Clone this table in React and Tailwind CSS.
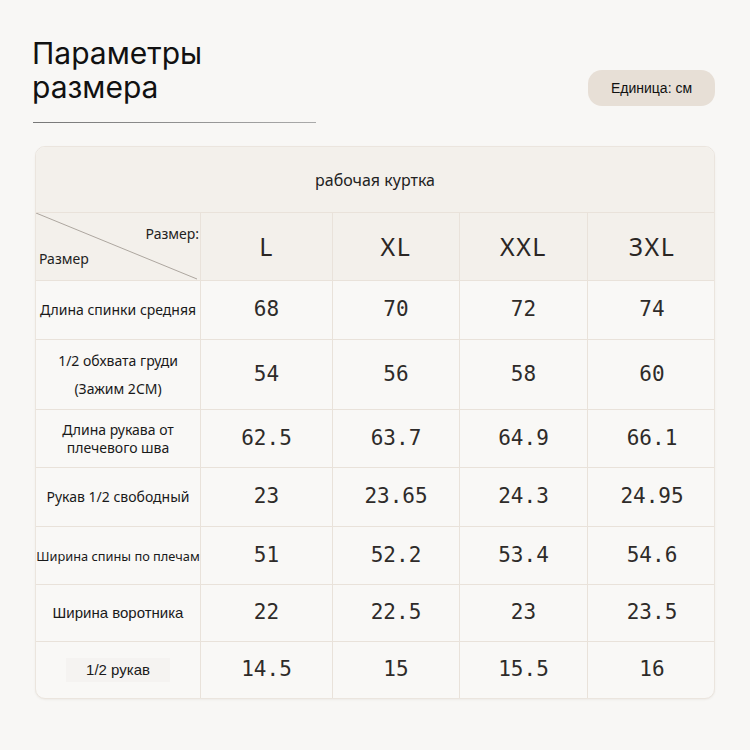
import React from "react";

const sizes = ["L", "XL", "XXL", "3XL"];
const rows = [
  { label: ["Длина спинки средняя"], vals: ["68", "70", "72", "74"], h: "h-[59px]" },
  { label: ["1/2 обхвата груди", "(Зажим 2CM)"], vals: ["54", "56", "58", "60"], h: "h-[70px]", spaced: true },
  { label: ["Длина рукава от", "плечевого шва"], vals: ["62.5", "63.7", "64.9", "66.1"], h: "h-[58px]" },
  { label: ["Рукав 1/2 свободный"], vals: ["23", "23.65", "24.3", "24.95"], h: "h-[59px]" },
  { label: ["Ширина спины по плечам"], vals: ["51", "52.2", "53.4", "54.6"], h: "h-[58px]", small: true },
  { label: ["Ширина воротника"], vals: ["22", "22.5", "23", "23.5"], h: "h-[57px]", narrow: true },
  { label: ["1/2 рукав"], vals: ["14.5", "15", "15.5", "16"], h: "h-[56px]", narrow: true, box: true, last: true },
];

export default function App() {
  return (
    <div className="w-[750px] h-[750px] bg-[#f8f7f5] relative overflow-hidden" style={{ fontFamily: "'Noto Sans', sans-serif" }}>
      <div className="flex justify-between items-start pl-[32px] pr-[35px] pt-[36px]">
        <div>
          <h1 className="text-[30px] leading-[34px] text-[#111]" style={{ fontFamily: "Inter, sans-serif" }}>
            Параметры
            <br />
            размера
          </h1>
        </div>
        <div className="mt-[34px] w-[127px] h-[36px] rounded-[14px] bg-[#e7dfd6] flex items-center justify-center text-[14px] text-[#111]" style={{ fontFamily: "'Liberation Sans', sans-serif" }}>
          Единица: см
        </div>
      </div>
      <div className="ml-[33px] mt-[16px] w-[283px] h-[1px] bg-gradient-to-r from-[#777] to-[#aaa]" />
      <div className="ml-[35px] mt-[23px] w-[680px] rounded-[10px] border border-[#ebe5de] overflow-hidden bg-[#f9f8f6] shadow-[0_1px_2px_rgba(120,100,80,0.08)]">
        <div className="h-[66px] bg-[#f3f0eb] border-b border-[#e9e2da] flex items-center justify-center text-[16px] text-[#222]">
          рабочая куртка
        </div>
        <div className="grid grid-cols-[165px_132px_127px_128px_128px]">
          <div className="relative h-[68px] bg-[#f3f0eb] border-r border-b border-[#e9e2da]">
            <svg className="absolute inset-0" width="165" height="68">
              <line x1="0" y1="0" x2="161" y2="66" stroke="#9a938c" strokeWidth="0.8" />
            </svg>
            <span className="absolute right-[1px] top-[10px] text-[14px] text-[#222]">Размер:</span>
            <span className="absolute left-[3px] top-[35px] text-[14px] text-[#222]">Размер</span>
          </div>
          {sizes.map((s, i) => (
            <div key={s} className={`h-[68px] bg-[#f3f0eb] border-b border-[#e9e2da] flex items-center justify-center text-[25px] tracking-[1.5px] text-[#2a2624] ${i < 3 ? "border-r" : ""}`}>
              {s}
            </div>
          ))}
          {rows.map((r, ri) => (
            <React.Fragment key={ri}>
              <div className={`${r.h} border-r border-[#e9e2da] ${r.last ? "" : "border-b"} flex flex-col items-center justify-center text-center whitespace-nowrap text-[#1a1a1a] ${r.narrow ? "text-[15px]" : r.small ? "text-[12.8px]" : "text-[14px]"} ${r.spaced ? "leading-[28px]" : "leading-[18px]"}`} style={r.narrow ? { fontFamily: "'Liberation Sans', sans-serif" } : undefined}>
                {r.box ? (
                  <span className="bg-[#f5f3f1] px-[20px] py-[3px]">{r.label[0]}</span>
                ) : (
                  r.label.map((l) => <span key={l}>{l}</span>)
                )}
              </div>
              {r.vals.map((v, i) => (
                <div key={i} className={`${r.h} border-[#e9e2da] ${i < 3 ? "border-r" : ""} ${r.last ? "" : "border-b"} flex items-center justify-center text-[21px] text-[#2e2b29]`} style={{ fontFamily: "'DejaVu Sans Mono', monospace" }}>
                  {v}
                </div>
              ))}
            </React.Fragment>
          ))}
        </div>
      </div>
    </div>
  );
}
